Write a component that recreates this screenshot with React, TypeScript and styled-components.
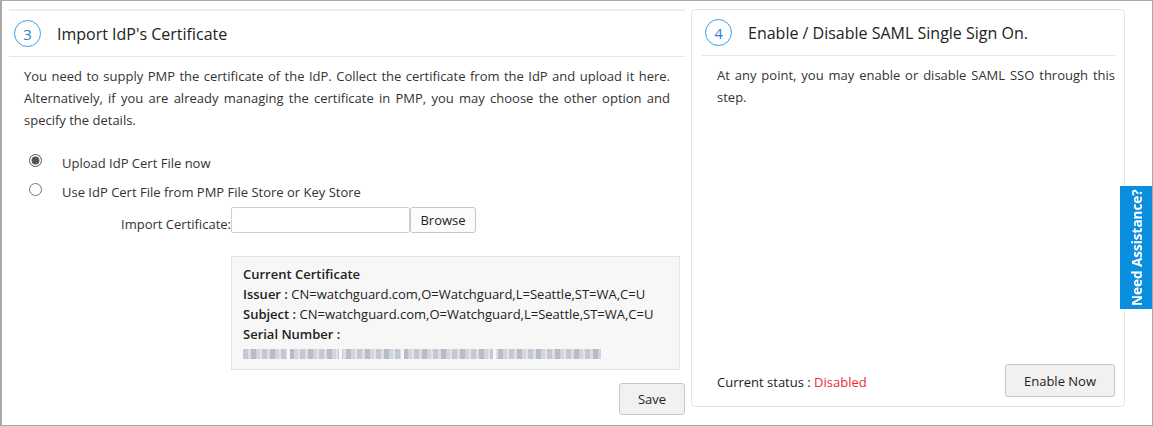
import React from 'react';
import styled, { createGlobalStyle } from 'styled-components';

const GlobalStyle = createGlobalStyle`
  html, body {
    margin: 0;
    padding: 0;
    background: #fff;
  }
  body {
    font-family: "Open Sans", "Noto Sans", Arial, sans-serif;
    color: #333;
  }
  * {
    box-sizing: border-box;
  }
`

const Frame = styled.div`
  position: relative;
  width: 1153px;
  height: 426px;
  border: 1px solid #a9a9a9;
  border-left-width: 2px;
  padding: 8px 27px 0 7px;
  display: flex;
  align-items: flex-start;
  gap: 6px;
  overflow: hidden;
`

const LeftPanel = styled.section`
  width: 676px;
  border-top: 2px solid #eeeeee;
  display: flex;
  flex-direction: column;
`

const RightPanel = styled.section`
  width: 434px;
  height: 398px;
  border: 1px solid #e3e3e3;
  border-radius: 4px;
  padding: 0 9px 9px 10px;
  display: flex;
  flex-direction: column;
`

const Header = styled.div<{ $inset: number }>`
  height: 46px;
  display: flex;
  align-items: center;
  padding-left: ${p => p.$inset}px;
  border-bottom: 1px solid #e6e6e6;
`

const StepNumber = styled.span`
  width: 27px;
  height: 27px;
  border: 1px solid #3a9ee4;
  border-radius: 50%;
  color: #2f7fd0;
  font-size: 15px;
  display: flex;
  align-items: center;
  justify-content: center;
  margin-right: 16px;
`

const Title = styled.h2`
  margin: 0;
  font-size: 16px;
  font-weight: 400;
  color: #222;
`

const Body = styled.div<{ $left: number; $right: number }>`
  padding: 0 ${p => p.$right}px 0 ${p => p.$left}px;
`

const Paragraph = styled.p`
  margin: 8px 0 0 0;
  font-size: 13px;
  line-height: 22px;
  text-align: justify;
  color: #333;
`

const Options = styled.div`
  margin-top: 17px;
  padding-left: 5px;
`

const OptionRow = styled.label`
  height: 29px;
  display: flex;
  align-items: center;
  font-size: 13px;
  color: #333;
`

const Radio = styled.input`
  width: 13px;
  height: 13px;
  margin: 0 20px 4px 0;
  accent-color: #555;
`

const ImportRow = styled.div`
  display: flex;
  align-items: center;
  margin-top: 1px;
`

const ImportLabel = styled.span`
  width: 207px;
  text-align: right;
  font-size: 13px;
  padding-top: 8px;
`

const FileInput = styled.input`
  width: 179px;
  height: 26px;
  border: 1px solid #cfcfcf;
  border-radius: 2px;
  font-family: inherit;
  margin: 0;
`

const Button = styled.button<{ $w: number; $h: number }>`
  width: ${p => p.$w}px;
  height: ${p => p.$h}px;
  border: 1px solid #c6c6c6;
  border-radius: 3px;
  background: ${p => (p.$h > 28 ? '#f1f1f1' : '#fbfbfb')};
  font-family: inherit;
  font-size: 13px;
  color: #222;
  padding: 0;
  cursor: pointer;
`

const CertBox = styled.div`
  margin: 23px 0 0 207px;
  width: 449px;
  height: 114px;
  padding: 7px 11px;
  background: #f7f7f7;
  border: 1px solid #e4e4e4;
  font-size: 13px;
  line-height: 20px;
  color: #222;
`

const CertLine = styled.div`
  white-space: nowrap;
`

const Strong = styled.span`
  font-weight: 600;
`

const Blurred = styled.span`
  display: inline-block;
  margin-top: 5px;
  height: 10px;
  width: 358px;
  background:
    linear-gradient(90deg, transparent 0 44px, #f7f7f7 44px 47px, transparent 47px 96px, #f7f7f7 96px 99px,
      transparent 99px 158px, #f7f7f7 158px 161px, transparent 161px 250px, #f7f7f7 250px 253px, transparent 253px),
    repeating-linear-gradient(
      90deg,
      #c4c8d0 0 5px,
      #dcdee3 5px 8px,
      #b7bcc6 8px 13px,
      #d2d5dc 13px 17px,
      #e3e4e8 17px 19px
    );
  filter: blur(0.7px);
`

const SaveRow = styled.div`
  display: flex;
  justify-content: flex-end;
  margin-top: 13px;
`

const Footer = styled.div`
  margin-top: auto;
  display: flex;
  align-items: center;
  justify-content: space-between;
  padding-left: 15px;
`

const Status = styled.span`
  font-size: 13px;
  color: #222;
  padding-top: 2px;
`

const Disabled = styled.span`
  color: #ec2b35;
`

const AssistTab = styled.div`
  position: absolute;
  right: -1px;
  top: 185px;
  width: 33px;
  height: 123px;
  background: #0a8fdf;
  color: #fff;
  font-weight: 700;
  font-size: 13.5px;
  writing-mode: vertical-rl;
  transform: rotate(180deg);
  display: flex;
  align-items: center;
  justify-content: center;
  cursor: pointer;
`

export default function App() {
  return (
    <>
      <GlobalStyle />
      <Frame>
        <LeftPanel>
          <Header $inset={5}>
            <StepNumber>3</StepNumber>
            <Title>Import IdP's Certificate</Title>
          </Header>
          <Body $left={15} $right={15}>
            <Paragraph>
              You need to supply PMP the certificate of the IdP. Collect the certificate from the IdP and upload it here.
              Alternatively, if you are already managing the certificate in PMP, you may choose the other option and
              specify the details.
            </Paragraph>
            <Options>
              <OptionRow>
                <Radio type="radio" name="cert" defaultChecked />
                Upload IdP Cert File now
              </OptionRow>
              <OptionRow>
                <Radio type="radio" name="cert" />
                Use IdP Cert File from PMP File Store or Key Store
              </OptionRow>
            </Options>
            <ImportRow>
              <ImportLabel>Import Certificate:</ImportLabel>
              <FileInput type="text" />
              <Button $w={66} $h={26}>Browse</Button>
            </ImportRow>
            <CertBox>
              <CertLine><Strong>Current Certificate</Strong></CertLine>
              <CertLine><Strong>Issuer :</Strong> CN=watchguard.com,O=Watchguard,L=Seattle,ST=WA,C=U</CertLine>
              <CertLine><Strong>Subject :</Strong> CN=watchguard.com,O=Watchguard,L=Seattle,ST=WA,C=U</CertLine>
              <CertLine><Strong>Serial Number :</Strong></CertLine>
              <CertLine><Blurred /></CertLine>
            </CertBox>
          </Body>
          <SaveRow>
            <Button $w={66} $h={32}>Save</Button>
          </SaveRow>
        </LeftPanel>
        <RightPanel>
          <Header $inset={3}>
            <StepNumber>4</StepNumber>
            <Title>Enable / Disable SAML Single Sign On.</Title>
          </Header>
          <Body $left={15} $right={0}>
            <Paragraph>
              At any point, you may enable or disable SAML SSO through this step.
            </Paragraph>
          </Body>
          <Footer>
            <Status>
              Current status : <Disabled>Disabled</Disabled>
            </Status>
            <Button $w={110} $h={33}>Enable Now</Button>
          </Footer>
        </RightPanel>
        <AssistTab>Need Assistance?</AssistTab>
      </Frame>
    </>
  );
}
